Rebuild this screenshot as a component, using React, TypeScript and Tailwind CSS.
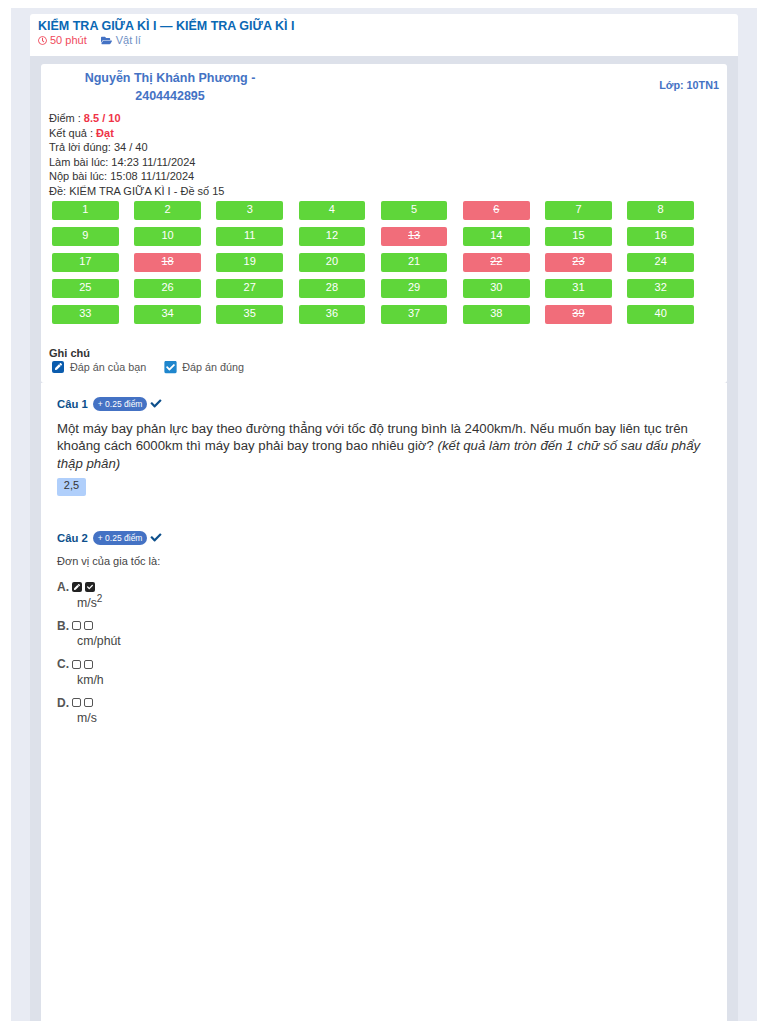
import React from "react";
import { FaCheck, FaCheckSquare, FaFolderOpen, FaPen, FaRegClock } from "react-icons/fa";

const WRONG = [6, 13, 18, 22, 23, 39];
const NUMBERS = Array.from({ length: 40 }, (_, i) => i + 1);

const Badge = () => (
  <span className="ml-[5px] inline-flex h-[14px] items-center rounded-full bg-[#4472c4] px-[5px] text-[8.5px] text-white">
    + 0.25 điểm
  </span>
);

const Heading = ({ n }: { n: number }) => (
  <div className="flex items-center text-[11.3px] leading-[14px] text-[#0d4f8b]">
    <span className="font-bold">Câu {n}</span>
    <Badge />
    <FaCheck className="ml-[3px] h-[11px] w-[12px] text-[#0d4f8b]" />
  </div>
);

const Option = ({ label, text, picked }: { label: string; text: React.ReactNode; picked?: boolean }) => (
  <div className="mb-[7.5px]">
    <div className="flex h-[15px] items-center">
      <span className="w-[15px] text-[12px] font-bold text-[#555]">{label}</span>
      {picked ? (
        <span className="flex gap-[3px]">
          <span className="flex h-[10px] w-[10px] items-center justify-center rounded-[2px] bg-[#222]">
            <FaPen className="h-[6px] w-[6px] text-white" />
          </span>
          <span className="flex h-[10px] w-[10px] items-center justify-center rounded-[2px] bg-[#222]">
            <FaCheck className="h-[6px] w-[6px] text-white" />
          </span>
        </span>
      ) : (
        <span className="flex gap-[3px]">
          <span className="h-[9px] w-[9px] rounded-[2px] border border-[#555]" />
          <span className="h-[9px] w-[9px] rounded-[2px] border border-[#555]" />
        </span>
      )}
    </div>
    <div className="pl-[20px] text-[12.3px] leading-[16px] text-[#444]">{text}</div>
  </div>
);

export default function App() {
  return (
    <div className="bg-white px-[11px] pt-2 font-['Liberation_Sans',Arial,sans-serif] text-[#333]">
      <div className="h-[1013px] overflow-hidden bg-[#e8ebf3] px-[19px] pt-[6px]">
        <div className="h-[42px] rounded-t-[3px] bg-white px-2 pt-[4px]">
          <h1 className="text-[12.5px] font-bold leading-[16px] text-[#0a68b4]">
            KIỂM TRA GIỮA KÌ I — KIỂM TRA GIỮA KÌ I
          </h1>
          <div className="flex items-center text-[11px] leading-[12px]">
            <span className="flex items-center text-[#ef4a5c]">
              <FaRegClock className="mr-[3px] h-[9px] w-[9px]" />
              50 phút
            </span>
            <span className="ml-[14px] flex items-center text-[#6f8fc4]">
              <FaFolderOpen className="mr-[4px] h-[11px] w-[11px] text-[#4472c4]" />
              Vật lí
            </span>
          </div>
        </div>

        <div className="h-full bg-[#dde1ea] px-[11px] pt-2">
          <div className="rounded-[3px] bg-white px-2 pb-[9px] pt-[5px]">
            <div className="flex justify-between">
              <div className="w-[242px] text-center text-[12.5px] font-bold leading-[18px] text-[#4472c4]">
                Nguyễn Thị Khánh Phương -<br />2404442895
              </div>
              <div className="pt-[9px] text-[10.8px] font-bold leading-[14px] text-[#4472c4]">Lớp: 10TN1</div>
            </div>

            <div className="mt-[6px] text-[11px] leading-[14.6px] text-[#333]">
              <div>
                Điểm : <b className="text-[#ef3347]">8.5 / 10</b>
              </div>
              <div>
                Kết quả : <b className="text-[#ef3347]">Đạt</b>
              </div>
              <div>Trả lời đúng: 34 / 40</div>
              <div>Làm bài lúc: 14:23 11/11/2024</div>
              <div>Nộp bài lúc: 15:08 11/11/2024</div>
              <div>Đề: KIỂM TRA GIỮA KÌ I - Đề số 15</div>
            </div>

            <div className="mt-[2px] grid grid-cols-8 gap-x-[15.5px] gap-y-[7px] pl-[3px] pr-[25px]">
              {NUMBERS.map((n) =>
                WRONG.includes(n) ? (
                  <div key={n} className="h-[19px] rounded-[2px] bg-[#f16d7a] text-center text-[11px] leading-[16px] text-white line-through">
                    {n}
                  </div>
                ) : (
                  <div key={n} className="h-[19px] rounded-[2px] bg-[#5fd63a] text-center text-[11px] leading-[16px] text-white">
                    {n}
                  </div>
                ),
              )}
            </div>

            <div className="mt-[22px] text-[11px] font-bold leading-[14px] text-[#333]">Ghi chú</div>
            <div className="flex items-center pl-[3px] text-[10.8px] leading-[14px] text-[#555]">
              <span className="flex h-3 w-3 items-center justify-center rounded-[2px] bg-[#0b5cad]">
                <FaPen className="h-[7px] w-[7px] text-white" />
              </span>
              <span className="ml-[6px]">Đáp án của bạn</span>
              <FaCheckSquare className="ml-[18px] h-[14px] w-[13px] text-[#1f86cd]" />
              <span className="ml-[5px]">Đáp án đúng</span>
            </div>
          </div>

          <div className="h-full bg-white px-4 pt-[14px]">
            <Heading n={1} />
            <p className="mt-[9px] text-[13.23px] leading-[17.7px] text-[#333]">
              Một máy bay phản lực bay theo đường thẳng với tốc độ trung bình là 2400km/h. Nếu muốn bay liên tục trên
              khoảng cách 6000km thì máy bay phải bay trong bao nhiêu giờ?{" "}
              <i>(kết quả làm tròn đến 1 chữ số sau dấu phẩy thập phân)</i>
            </p>
            <div className="mt-[5px] block h-[18px] w-[29px] rounded-[2px] bg-[#b0cffb] text-center text-[11px] leading-[14px] text-[#333]">
              2,5
            </div>

            <div className="mt-[35px]">
              <Heading n={2} />
            </div>
            <p className="mt-[9px] text-[11px] leading-[14px] text-[#444]">Đơn vị của gia tốc là:</p>
            <div className="mt-[12px]">
              <Option
                label="A."
                picked
                text={
                  <>
                    m/s<sup className="text-[10px]">2</sup>
                  </>
                }
              />
              <Option label="B." text="cm/phút" />
              <Option label="C." text="km/h" />
              <Option label="D." text="m/s" />
            </div>
          </div>
        </div>
      </div>
    </div>
  );
}
